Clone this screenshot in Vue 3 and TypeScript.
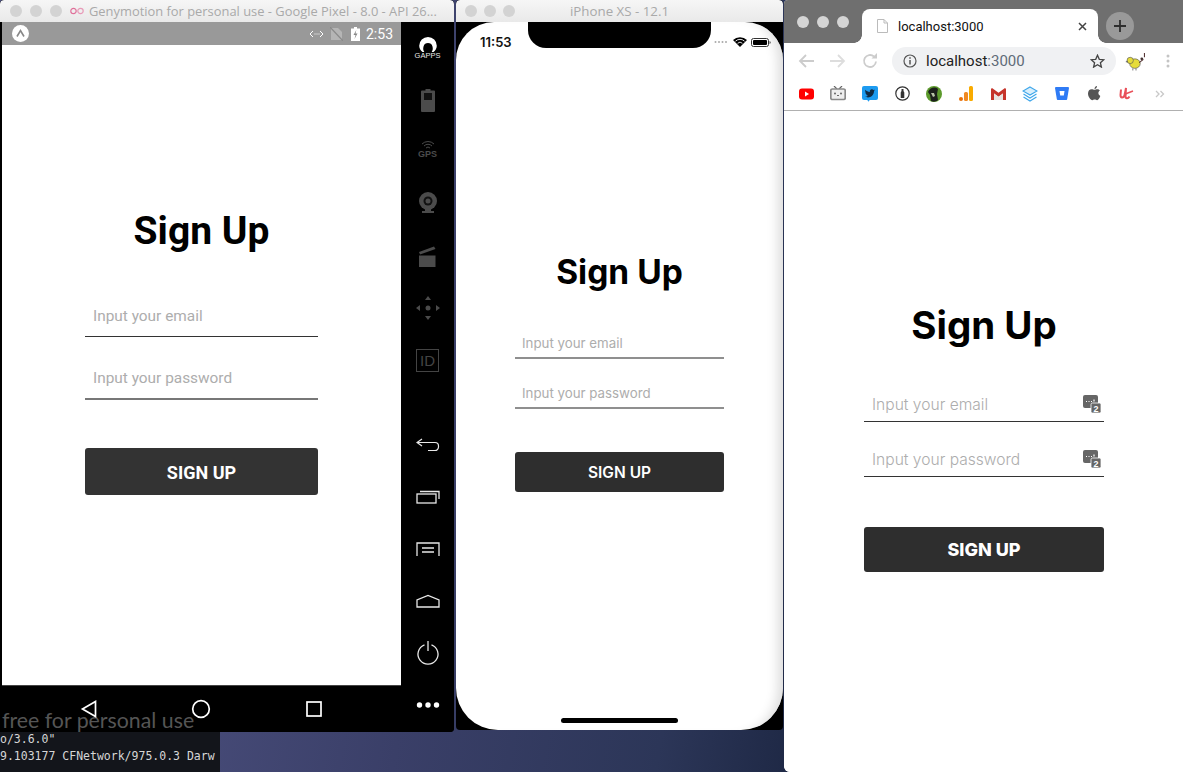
<script setup lang="ts">
const placeholders = ["Input your email", "Input your password"];

const bookmarkCount = 12;
const slots = Array.from({ length: bookmarkCount }, (_, i) => i);
</script>

<template>
  <div class="desktop">
    <!-- terminal peeking out under the emulator -->
    <div class="terminal">
      <div>o/3.6.0"</div>
      <div>9.103177 CFNetwork/975.0.3 Darw</div>
    </div>

    <!-- Genymotion -->
    <section class="window geny">
      <header class="titlebar">
        <i class="dot" /><i class="dot" /><i class="dot" />
        <svg class="geny-logo" width="14" height="8" viewBox="0 0 14 8">
          <circle cx="3.5" cy="4" r="2.7" fill="none" stroke="#e0709a" stroke-width="1.2" />
          <circle cx="10.5" cy="4" r="2.7" fill="none" stroke="#e89ab8" stroke-width="1.2" />
        </svg>
        <span class="geny-title">Genymotion for personal use - Google Pixel - 8.0 - API 26...</span>
      </header>
      <div class="geny-body">
        <div class="phone">
          <div class="statusbar">
            <svg class="expo" width="17" height="17" viewBox="0 0 17 17">
              <circle cx="8.5" cy="8.5" r="8.5" fill="#fff" />
              <path d="M5 11.5 8.5 5.5 12 11.5" fill="none" stroke="#888" stroke-width="1.6" />
            </svg>
            <span class="status-right">
              <svg width="15" height="8" viewBox="0 0 15 8">
                <path d="M4 1 1 4l3 3M11 1l3 3-3 3" fill="none" stroke="#fff" stroke-width="1" />
                <path d="M5.500 4h1M7.500 4h1M9.500 4h1" stroke="#fff" stroke-width="1" />
              </svg>
              <svg width="13" height="14" viewBox="0 0 13 14">
                <path d="M1 1h7l4 4v8H1z" fill="#b5b5b5" />
                <path d="M0 0l13 14" stroke="#8a8a8a" stroke-width="1.2" />
              </svg>
              <svg class="batt" width="9" height="14" viewBox="0 0 9 14">
                <path d="M3 0h3v1.500h3V14H0V1.500h3z" fill="#fff" />
                <path d="M5.300 3 2.500 8h2l-1 4 3-5.500H4.500z" fill="#888" />
              </svg>
              <span class="clock">2:53</span>
            </span>
          </div>
          <div class="app app-android">
            <h1 class="title">Sign Up</h1>
            <div v-for="(p, i) in placeholders" :key="p" class="field" :class="'f' + i">
              <span class="ph">{{ p }}</span>
            </div>
            <button class="submit">SIGN UP</button>
          </div>
          <div class="navbar">
            <span class="free">free for personal use</span>
            <svg class="nav-ico" width="18" height="20" viewBox="0 0 18 20">
              <path d="M15.500 2.500v15L2.500 10z" fill="none" stroke="#fff" stroke-width="1.700" />
            </svg>
            <svg class="nav-ico" width="20" height="20" viewBox="0 0 20 20">
              <circle cx="10" cy="10" r="8.300" fill="none" stroke="#fff" stroke-width="1.700" />
            </svg>
            <svg class="nav-ico" width="18" height="18" viewBox="0 0 18 18">
              <rect x="2" y="2" width="14" height="14" fill="none" stroke="#fff" stroke-width="1.700" />
            </svg>
          </div>
        </div>

        <aside class="rail">
          <div class="rail-group">
            <div class="slot gapps">
              <svg width="20" height="15" viewBox="0 0 20 15">
                <path d="M10 0a8.800 8.800 0 0 1 8.800 8.800c0 2.600-1.300 4.800-3.300 6.200h-1.800c1-1.400 1.500-3.600.7-5.800a4.600 4.600 0 0 0-8.800 0c-.8 2.200-.3 4.400.7 5.800H4.500c-2-1.400-3.300-3.600-3.300-6.200A8.800 8.800 0 0 1 10 0z" fill="#fff" />
              </svg>
              <span>GAPPS</span>
            </div>
            <div class="slot">
              <svg width="14" height="23" viewBox="0 0 14 23">
                <path d="M4.500 0h5v1.500H13a1 1 0 0 1 1 1V22a1 1 0 0 1-1 1H1a1 1 0 0 1-1-1V2.500a1 1 0 0 1 1-1h3.500z" fill="#4b4b4b" />
                <rect x="3" y="4" width="8" height="7" fill="#111" />
              </svg>
            </div>
            <div class="slot gps">
              <svg width="14" height="8" viewBox="0 0 14 8">
                <path d="M1 3a8.500 8.500 0 0 1 12 0M3 5a5.500 5.500 0 0 1 8 0M5 7a2.800 2.800 0 0 1 4 0" fill="none" stroke="#4b4b4b" stroke-width="1" />
              </svg>
              <span>GPS</span>
            </div>
            <div class="slot cam">
              <svg width="20" height="21" viewBox="0 0 20 21">
                <circle cx="10" cy="9" r="9" fill="#4b4b4b" />
                <circle cx="10" cy="9" r="4.500" fill="#111" />
                <circle cx="10" cy="9" r="2.500" fill="#4b4b4b" />
                <path d="M7 17h6v2h3v2H4v-2h3z" fill="#4b4b4b" />
              </svg>
            </div>
            <div class="slot">
              <svg width="17" height="21" viewBox="0 0 17 21">
                <path d="M0 6 15 .5 16.500 3 1 8.500z" fill="#4b4b4b" />
                <rect y="9.500" width="16.500" height="11.500" fill="#4b4b4b" />
              </svg>
            </div>
            <div class="slot">
              <svg width="24" height="24" viewBox="0 0 24 24" fill="#4b4b4b">
                <path d="M12 0l3 4H9zM12 24l-3-4h6zM0 12l4-3v6zM24 12l-4 3V9z" />
                <circle cx="12" cy="12" r="2.500" />
              </svg>
            </div>
            <div class="slot">
              <div class="id-box">ID</div>
            </div>
          </div>
          <div class="rail-group lower">
            <div class="slot">
              <svg width="24" height="14" viewBox="0 0 24 14" fill="none" stroke="#e8e8e8" stroke-width="1.200">
                <path d="M6 1 1 4.500 6 8M1 4.500h18a3.500 3.500 0 0 1 3.500 3.500v1a3.500 3.500 0 0 1-3.500 3.500H12" />
              </svg>
            </div>
            <div class="slot">
              <svg width="24" height="14" viewBox="0 0 24 14" fill="none" stroke="#e8e8e8" stroke-width="1.300">
                <rect x="1" y="4" width="19" height="9" />
                <path d="M4 1.500h19V9" />
              </svg>
            </div>
            <div class="slot">
              <svg width="24" height="14" viewBox="0 0 24 14" fill="none" stroke="#e8e8e8" stroke-width="1.300">
                <path d="M1 14V1h22v13M6 6h12M6 10h12" />
              </svg>
            </div>
            <div class="slot">
              <svg width="24" height="14" viewBox="0 0 24 14" fill="none" stroke="#e8e8e8" stroke-width="1.300">
                <path d="M1 13V6l11-4.500L23 6v7z" />
              </svg>
            </div>
            <div class="slot">
              <svg width="24" height="24" viewBox="0 0 24 24" fill="none" stroke="#e8e8e8" stroke-width="1.300">
                <path d="M8.500 3.800a10 10 0 1 0 7 0M12 0v10" />
              </svg>
            </div>
            <div class="slot">
              <svg width="24" height="6" viewBox="0 0 24 6" fill="#fff">
                <circle cx="3.500" cy="3" r="2.700" /><circle cx="12" cy="3" r="2.700" /><circle cx="20.500" cy="3" r="2.700" />
              </svg>
            </div>
          </div>
        </aside>
      </div>
    </section>

    <!-- iOS simulator -->
    <section class="window sim">
      <header class="titlebar sim-bar">
        <i class="dot" /><i class="dot" /><i class="dot" />
        <span class="sim-title">iPhone XS - 12.1</span>
      </header>
      <div class="screen">
        <div class="notch" />
        <div class="ios-status">
          <span class="ios-time">11:53</span>
          <span class="ios-right">
            <svg width="15" height="4" viewBox="0 0 15 4" fill="#aaa">
              <circle cx="1.500" cy="2" r="1" /><circle cx="5" cy="2" r="1" /><circle cx="8.500" cy="2" r="1" /><circle cx="12" cy="2" r="1" />
            </svg>
            <svg width="14" height="10" viewBox="0 0 14 10">
              <path d="M7 10 0 3a10 10 0 0 1 14 0z" fill="#000" />
              <path d="M2.500 4.200a6.400 6.400 0 0 1 9 0M4.600 6.300a3.400 3.400 0 0 1 4.800 0" fill="none" stroke="#fff" stroke-width=".9" />
            </svg>
            <svg width="20" height="9" viewBox="0 0 20 9">
              <rect x=".5" y=".5" width="17" height="8" rx="2" fill="none" stroke="#333" />
              <rect x="2" y="2" width="14" height="5" rx="1" fill="#000" />
              <path d="M18.500 3v3c.8-.3 1.200-.8 1.200-1.500s-.4-1.200-1.200-1.500z" fill="#555" />
            </svg>
          </span>
        </div>
        <div class="app app-ios">
          <h1 class="title">Sign Up</h1>
          <div v-for="(p, i) in placeholders" :key="p" class="field" :class="'f' + i">
            <span class="ph">{{ p }}</span>
          </div>
          <button class="submit">SIGN UP</button>
        </div>
        <div class="home-bar" />
      </div>
    </section>

    <!-- Chrome -->
    <section class="window chrome">
      <div class="tabstrip">
        <i class="dot" /><i class="dot" /><i class="dot" />
        <div class="tab">
          <svg width="11" height="14" viewBox="0 0 11 14" fill="none" stroke="#bbb" stroke-width="1">
            <path d="M.5.500h6.500l3.500 3.500v9.500H.5zM7 .5V4h3.500" />
          </svg>
          <span class="tab-label">localhost:3000</span>
          <svg class="tab-close" width="9" height="9" viewBox="0 0 9 9">
            <path d="M1 1l7 7M8 1 1 8" stroke="#444" stroke-width="1.500" />
          </svg>
        </div>
        <div class="newtab">
          <svg width="14" height="14" viewBox="0 0 14 14">
            <path d="M7 1v12M1 7h12" stroke="#2e2e2e" stroke-width="1.800" />
          </svg>
        </div>
      </div>

      <div class="toolbar">
        <svg class="tool" width="16" height="14" viewBox="0 0 16 14" fill="none" stroke="#ccc" stroke-width="1.800">
          <path d="M8 1 2 7l6 6M2 7h14" />
        </svg>
        <svg class="tool" width="16" height="14" viewBox="0 0 16 14" fill="none" stroke="#ddd" stroke-width="1.800">
          <path d="M8 1l6 6-6 6M14 7H0" />
        </svg>
        <svg class="tool" width="16" height="16" viewBox="0 0 16 16" fill="none" stroke="#ccc" stroke-width="1.800">
          <path d="M14 8.500A6 6 0 1 1 12 3.500" />
          <path d="M9.500 5.500H15V0z" fill="#ccc" stroke="none" />
        </svg>
        <div class="omnibox">
          <svg width="14" height="14" viewBox="0 0 14 14" fill="none" stroke="#555" stroke-width="1.200">
            <circle cx="7" cy="7" r="6" />
            <path d="M7 6v4.500M7 3.300v1.400" stroke-width="1.500" />
          </svg>
          <span class="url">localhost<em>:3000</em></span>
          <svg class="star" width="15" height="14" viewBox="0 0 15 14">
            <path d="M7.500 1.200 9.300 5.300l4.500.4-3.400 3 1 4.400-3.900-2.300-3.900 2.300 1-4.400-3.400-3 4.500-.4z" fill="none" stroke="#444" stroke-width="1.300" />
          </svg>
        </div>
        <svg class="bird" width="22" height="19" viewBox="0 0 20 18">
          <ellipse cx="9" cy="11" rx="5" ry="4.500" fill="#e6dc3a" stroke="#555" stroke-width=".6" />
          <circle cx="4.500" cy="8" r="3" fill="#e6dc3a" stroke="#555" stroke-width=".6" />
          <path d="M2 8 0 9.500l2 .5z" fill="#555" />
          <path d="M13 10l4-3M18 1v4" stroke="#533" stroke-width="1" />
          <circle cx="15.500" cy="6.500" r="1.300" fill="#433" />
          <path d="M7 15.500v2M10 15.500v2" stroke="#666" stroke-width=".8" />
        </svg>
        <svg class="kebab" width="4" height="14" viewBox="0 0 4 14" fill="#c4c4c4">
          <circle cx="2" cy="2" r="1.500" /><circle cx="2" cy="7" r="1.500" /><circle cx="2" cy="12" r="1.500" />
        </svg>
      </div>

      <div class="bookmarks">
        <span v-for="n in slots" :key="n" class="mark">
          <svg v-if="n === 0" width="15" height="12" viewBox="0 0 15 12">
            <rect width="15" height="11" y=".5" rx="3" fill="#f00" />
            <path d="M6 3.500v5l4-2.500z" fill="#fff" />
          </svg>
          <svg v-else-if="n === 1" width="16" height="15" viewBox="0 0 16 15">
            <path d="M4 0l3 3M12 0 9 3" stroke="#666" stroke-width="1.200" />
            <rect x=".8" y="3" width="14.400" height="10.500" rx="1.500" fill="#eee" stroke="#8a8a8a" stroke-width="1.700" />
            <circle cx="5" cy="7.500" r="1" fill="#666" /><circle cx="11" cy="7.500" r="1" fill="#666" />
            <path d="M7 9.500h2" stroke="#666" />
          </svg>
          <svg v-else-if="n === 2" width="16" height="16" viewBox="0 0 16 16">
            <rect width="16" height="14" rx="2" fill="#1d9bf0" />
            <path d="M6.500 15.800 5 13.500h3z" fill="#1d9bf0" />
            <path d="M13 4.300c-.4.200-.8.300-1.200.3.400-.3.800-.7.900-1.100-.4.200-.8.400-1.300.5a2.100 2.100 0 0 0-3.600 1.900C6 5.800 4.500 5 3.400 3.700c-.5 1-.3 2.100.7 2.800-.3 0-.6-.1-.9-.3 0 1 .7 1.900 1.700 2.100-.3.100-.6.100-.9 0 .3.800 1 1.400 2 1.400-.9.700-2 1-3 .9 3.700 2.200 9-.2 9-5.300.4-.3.700-.6 1-1z" fill="#102a43" />
          </svg>
          <svg v-else-if="n === 3" width="15" height="15" viewBox="0 0 15 15">
            <circle cx="7.500" cy="7.500" r="6.700" fill="#fff" stroke="#333" stroke-width="1.200" />
            <path d="M6.500 3h2v2l.8 1.500V12H5.700V6.500L6.500 5z" fill="#333" />
          </svg>
          <svg v-else-if="n === 4" width="16" height="16" viewBox="0 0 16 16">
            <circle cx="8" cy="8" r="8" fill="#5c9a2c" />
            <path d="M2 6c1-4 7-6 10-3l-1 5 1 6c-2 2-5 2-7 1L4 9z" fill="#1c211c" />
            <path d="M5 7h3l1 3-2 1z" fill="#b8c5a8" />
          </svg>
          <svg v-else-if="n === 5" width="14" height="15" viewBox="0 0 14 15">
            <circle cx="2" cy="13" r="2" fill="#e8710a" />
            <rect x="5" y="6" width="4" height="9" rx="1.500" fill="#f08a24" />
            <rect x="10" width="4" height="15" rx="1.500" fill="#f9ab00" />
          </svg>
          <svg v-else-if="n === 6" width="15" height="12" viewBox="0 0 15 12">
            <path d="M0 1.500C0 .5 1 0 2 .7l5.500 4L13 .7c1-.7 2-.2 2 .8V12h-3V5.500L7.500 8.800 3 5.500V12H0z" fill="#c5342a" />
            <path d="M3 5.500 7.500 8.800 12 5.500V12H3z" fill="#e8e4e0" />
          </svg>
          <svg v-else-if="n === 7" width="16" height="16" viewBox="0 0 16 16" fill="none" stroke="#3ea6ea" stroke-width="1.100">
            <path d="M8 1l7 4-7 4-7-4z" fill="#d8effc" />
            <path d="M1.500 8 8 12l6.500-4M1.500 11 8 15l6.500-4" />
          </svg>
          <svg v-else-if="n === 8" width="14" height="13" viewBox="0 0 14 13">
            <path d="M1 0h12a1 1 0 0 1 1 1l-1.800 11a1 1 0 0 1-1 1H2.800a1 1 0 0 1-1-1L0 1a1 1 0 0 1 1-1z" fill="#2f7bf5" />
            <path d="M4.500 4h5l-.7 4.500H5.200z" fill="#fff" />
          </svg>
          <svg v-else-if="n === 9" width="13" height="15" viewBox="0 0 13 15">
            <path d="M9 0c.1 1.500-1 3-2.500 3C6.400 1.500 7.500.2 9 0zM6.500 3.800c.8 0 1.500-.6 2.800-.6 1 0 2 .5 2.600 1.400-2.200 1.300-1.900 4.400.4 5.300-.6 1.700-1.900 4.300-3.200 4.300-.9 0-1.300-.6-2.400-.6s-1.500.6-2.400.6C2.700 14.200 0 10.800 0 7.500 0 4.800 1.700 3.300 3.500 3.300c1.300 0 2.200.5 3 .5z" fill="#555" />
          </svg>
          <svg v-else-if="n === 10" width="15" height="15" viewBox="0 0 15 15" fill="none" stroke="#e9505a" stroke-width="2">
            <path d="M2 3.500 1.500 9c0 3 2.500 3.500 4 .5L7 2 6.500 10c0 3 2.500 3 4 .5" />
            <path d="M5 8.500 14 5" stroke-width="1.500" />
          </svg>
          <svg v-else class="more" width="10" height="8" viewBox="0 0 10 8" fill="none" stroke="#c8c8c8" stroke-width="1.300">
            <path d="M1 1l3 3-3 3M5.500 1l3 3-3 3" />
          </svg>
        </span>
      </div>

      <div class="app app-web">
        <h1 class="title">Sign Up</h1>
        <div v-for="(p, i) in placeholders" :key="p" class="field" :class="'f' + i">
          <span class="ph">{{ p }}</span>
          <svg class="pw-key" width="18" height="18" viewBox="0 0 18 18">
            <rect width="15" height="13" rx="2" fill="#666" />
            <path d="M3 6.500h1M5.500 6.500h1M8 6.500h1M11 4.500v2" stroke="#fff" stroke-width="1.200" />
            <rect x="8" y="8" width="10" height="10" rx="1.500" fill="#666" stroke="#fff" stroke-width=".8" />
            <text x="13" y="16.500" text-anchor="middle" class="pw-num">2</text>
          </svg>
        </div>
        <button class="submit">SIGN UP</button>
      </div>
    </section>
  </div>
</template>

<style scoped>
.desktop {
  position: relative;
  width: 1183px;
  height: 772px;
  overflow: hidden;
  background: linear-gradient(100deg, #4d5180 15%, #3a3f68 40%, #2c3658 60%, #1c2642 72%);
}

.terminal {
  position: absolute;
  left: 0;
  top: 731px;
  width: 220px;
  height: 41px;
  background: #13151b;
  color: #d6d6d6;
  font: 11.5px/17px "DejaVu Sans Mono", monospace;
  white-space: nowrap;
  overflow: hidden;
}

.window {
  position: absolute;
  top: 0;
  display: flex;
  flex-direction: column;
  overflow: hidden;
}

.titlebar {
  height: 22px;
  flex: none;
  display: flex;
  align-items: center;
  gap: 8px;
  padding-left: 10px;
  background: linear-gradient(#f6f6f6, #e9e9e9);
  border-radius: 4px 4px 0 0;
  font-family: "Open Sans", "Liberation Sans", sans-serif;
  color: #a9a9a9;
}

.dot {
  width: 12px;
  height: 12px;
  border-radius: 50%;
  background: #d3d3d3;
  flex: none;
}

/* Genymotion */
.geny {
  left: 0;
  width: 454px;
  height: 732px;
  background: #000;
  border-radius: 4px 4px 4px 0;
}
.geny-logo {
  flex: none;
}
.geny-title {
  margin-left: -3px;
  font-size: 12.900px;
  white-space: nowrap;
}
.geny-body {
  flex: 1;
  display: flex;
  min-height: 0;
}
.phone {
  width: 401px;
  display: flex;
  flex-direction: column;
  padding-left: 2px;
  box-sizing: border-box;
}
.statusbar {
  height: 23px;
  flex: none;
  background: #999;
  display: flex;
  align-items: center;
  justify-content: space-between;
  padding: 0 8px 0 10px;
}
.status-right {
  display: flex;
  align-items: center;
  gap: 6px;
}
.clock {
  color: #fff;
  font: 14px Roboto, sans-serif;
}
.batt {
  margin-left: 2px;
}
.navbar {
  position: relative;
  height: 47px;
  flex: none;
  box-sizing: border-box;
  border-top: 1px solid #444;
}
.nav-ico {
  position: absolute;
  top: 13px;
}
.nav-ico:nth-of-type(1) {
  left: 78px;
}
.nav-ico:nth-of-type(2) {
  left: 189px;
}
.nav-ico:nth-of-type(3) {
  left: 303px;
  top: 14px;
}
.free {
  position: absolute;
  left: 0;
  top: 21px;
  color: #555;
  font: 21.300px/26px Lato, sans-serif;
  white-space: nowrap;
}

.rail {
  flex: 1;
  display: flex;
  flex-direction: column;
  background: #000;
}
.rail-group {
  display: flex;
  flex-direction: column;
}
.rail-group.lower {
  margin-top: 33px;
}
.slot {
  height: 52px;
  display: flex;
  flex-direction: column;
  align-items: center;
  justify-content: center;
  font-family: "Liberation Sans", sans-serif;
}
.gapps {
  color: #e6e6e6;
  font-size: 7.500px;
  line-height: 8px;
}
.gps {
  color: #4b4b4b;
  font-size: 9px;
  font-weight: 700;
  line-height: 10px;
  padding-bottom: 4px;
  box-sizing: border-box;
}
.cam {
  padding-bottom: 3px;
  box-sizing: border-box;
}
.id-box {
  width: 21px;
  height: 21px;
  border: 1.500px solid #444;
  color: #444;
  font-size: 15px;
  line-height: 21px;
  text-align: center;
}

/* iOS simulator */
.sim {
  left: 456px;
  width: 327px;
  height: 730px;
  background: #000;
  border-radius: 4px 4px 4px 4px;
}
.sim-bar {
  position: relative;
  gap: 7px;
  padding-left: 9px;
}
.sim-title {
  position: absolute;
  left: 0;
  right: 0;
  text-align: center;
  font-size: 13.300px;
}
.screen {
  position: relative;
  flex: 1;
  background: #fff;
  border-radius: 38px 38px 42px 42px;
  box-shadow: inset -14px 0 12px -9px #dcdcdc;
}
.notch {
  position: absolute;
  left: 72px;
  top: 0;
  width: 183px;
  height: 26px;
  background: #000;
  border-radius: 0 0 18px 18px;
}
.ios-status {
  position: absolute;
  left: 24px;
  right: 12px;
  top: 12px;
  height: 16px;
  display: flex;
  justify-content: space-between;
  align-items: center;
}
.ios-time {
  font: 600 13px Inter, sans-serif;
  color: #111;
}
.ios-right {
  display: flex;
  align-items: center;
  gap: 4px;
}
.home-bar {
  position: absolute;
  left: 105px;
  bottom: 7px;
  width: 117px;
  height: 5px;
  border-radius: 3px;
  background: #000;
}

/* Chrome */
.chrome {
  left: 784px;
  width: 399px;
  height: 772px;
  background: #fff;
  border-radius: 4px 0 0 6px;
}
.tabstrip {
  position: relative;
  height: 43px;
  flex: none;
  background: #6f6f6f;
  display: flex;
  align-items: flex-end;
}
.tabstrip .dot {
  position: absolute;
  top: 16px;
  background: #d4d4d4;
}
.tabstrip .dot:nth-child(1) {
  left: 13px;
}
.tabstrip .dot:nth-child(2) {
  left: 33px;
}
.tabstrip .dot:nth-child(3) {
  left: 53px;
}
.tab {
  position: relative;
  margin-left: 78px;
  width: 236px;
  height: 34px;
  background: #fff;
  border-radius: 8px 8px 0 0;
  display: flex;
  align-items: center;
  padding: 0 11px 0 15px;
  box-sizing: border-box;
  gap: 10px;
}
.tab::before,
.tab::after {
  content: "";
  position: absolute;
  bottom: 0;
  width: 8px;
  height: 8px;
}
.tab::before {
  left: -8px;
  background: radial-gradient(circle at 0 0, #6f6f6f 7.500px, #fff 8px);
}
.tab::after {
  right: -8px;
  background: radial-gradient(circle at 100% 0, #6f6f6f 7.500px, #fff 8px);
}
.tab-label {
  font: 13px Roboto, sans-serif;
  color: #111;
  flex: 1;
}
.newtab {
  position: absolute;
  left: 322px;
  top: 12px;
  width: 28px;
  height: 28px;
  border-radius: 50%;
  background: #999;
  display: flex;
  align-items: center;
  justify-content: center;
}
.toolbar {
  height: 34px;
  flex: none;
  display: flex;
  align-items: center;
  padding: 2px 0 0 14px;
  box-sizing: border-box;
}
.tool {
  margin-right: 16px;
  flex: none;
}
.omnibox {
  width: 224px;
  height: 28px;
  margin-left: -2px;
  border-radius: 14px;
  background: #f0f1f3;
  display: flex;
  align-items: center;
  padding: 0 11px;
  box-sizing: border-box;
  gap: 9px;
}
.url {
  flex: 1;
  font: 15px Roboto, sans-serif;
  color: #222;
}
.url em {
  font-style: normal;
  color: #5f6b78;
}
.bird {
  margin-left: 9px;
}
.kebab {
  margin-left: 19px;
}
.bookmarks {
  height: 34px;
  flex: none;
  display: flex;
  align-items: center;
  padding-left: 6px;
  border-bottom: 1px solid #b0b0b0;
  box-sizing: border-box;
}
.mark {
  width: 32px;
  display: flex;
  justify-content: center;
  align-items: center;
}
.more {
  margin-left: 3px;
}

/* the sign up form, shared by the three clients */
.app {
  flex: 1;
  display: flex;
  flex-direction: column;
  background: #fff;
}
.title {
  margin: 0;
  color: #000;
  text-align: center;
  font-weight: 700;
}
.field {
  display: flex;
  align-items: center;
  justify-content: space-between;
  box-sizing: border-box;
}
.ph {
  color: #adadad;
}
.submit {
  border: 0;
  color: #fff;
  background: #2e2e2e;
  padding: 0;
}

.app-android {
  padding: 163px 83px 0 83px;
  font-family: Roboto, sans-serif;
}
.app-android .title {
  font-size: 39px;
  line-height: 46px;
}
.app-android .field {
  height: 42px;
  padding: 0 8px 0;
  font-size: 15.400px;
  border-bottom: 1px solid #333;
}
.app-android .f0 {
  margin-top: 41px;
}
.app-android .f1 {
  margin-top: 21px;
  border-bottom: 2px solid #777;
}
.app-android .submit {
  height: 47px;
  margin-top: 48px;
  padding-top: 1px;
  border-radius: 3px;
  background: #333;
  font: 700 18px Roboto, sans-serif;
}

.app-ios {
  position: absolute;
  left: 59px;
  top: 230px;
  width: 209px;
  font-family: Inter, sans-serif;
  background: transparent;
}
.app-ios .title {
  font-size: 33.500px;
  line-height: 40px;
}
.app-ios .field {
  height: 34px;
  padding: 3px 7px 0;
  font-size: 13.300px;
  border-bottom: 2px solid #8f8f8f;
}
.app-ios .f0 {
  margin-top: 33px;
}
.app-ios .f1 {
  margin-top: 16px;
}
.app-ios .submit {
  height: 40px;
  margin-top: 43px;
  border-radius: 3px;
  font: 600 15.500px Inter, sans-serif;
}

.app-web {
  padding: 192px 79px 0 80px;
  font-family: Inter, sans-serif;
}
.app-web .title {
  font-size: 38.500px;
  line-height: 44px;
}
.app-web .field {
  height: 36px;
  padding: 1px 3px 0 8px;
  font-size: 15.600px;
  font-weight: 300;
  border-bottom: 1px solid #333;
}
.app-web .f0 {
  margin-top: 39px;
}
.app-web .f1 {
  margin-top: 19px;
}
.app-web .submit {
  height: 45px;
  margin-top: 50px;
  border-radius: 3px;
  font: 800 18px Inter, sans-serif;
}
.pw-num {
  font: 700 9px "Liberation Sans", sans-serif;
  fill: #fff;
}
</style>

<style>
body {
  margin: 0;
  overflow: hidden;
}
</style>
